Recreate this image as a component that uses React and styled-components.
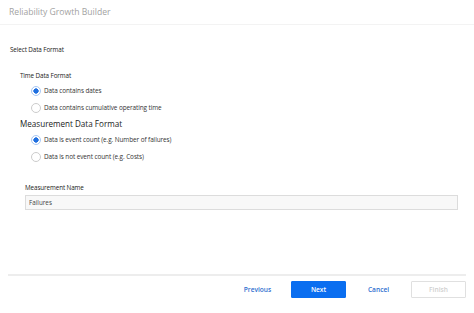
import React, { useState } from 'react';
import styled, { createGlobalStyle } from 'styled-components';

const GlobalStyle = createGlobalStyle`
  html, body {
    margin: 0;
    padding: 0;
    background: #ffffff;
    font-family: 'Open Sans', 'Liberation Sans', sans-serif;
  }
`;

const Page = styled.div`
  width: 474px;
  height: 313px;
  display: flex;
  flex-direction: column;
  overflow: hidden;
`;

const Header = styled.div`
  height: 24px;
  padding-left: 9px;
  display: flex;
  align-items: center;
  border-bottom: 1px solid #f3f3f3;
  font-size: 8.6px;
  color: #a2a2a2;
`;

const Body = styled.div`
  flex: 1;
  padding: 20px 0 0 10px;
  display: flex;
  flex-direction: column;
`;

const StepTitle = styled.div`
  font-size: 6.3px;
  letter-spacing: -0.1px;
  color: #222;
  margin-bottom: 17px;
`;

const Group = styled.div`
  padding-left: 10px;
`;

const SmallLabel = styled.div`
  font-size: 6.3px;
  letter-spacing: -0.1px;
  color: #222;
  margin-bottom: ${(p) => p.$space ?? 5}px;
`;

const BigLabel = styled.div`
  font-size: 8.1px;
  color: #222;
  margin: 5px 0 5px;
`;

const RadioList = styled.div`
  padding-left: 11px;
  display: flex;
  flex-direction: column;
  gap: 6px;
`;

const RadioRow = styled.label`
  display: flex;
  align-items: center;
  gap: 3px;
  height: 11px;
  font-size: 6.4px;
  letter-spacing: -0.08px;
  color: #333;
  cursor: pointer;
`;

const RadioDot = styled.span`
  box-sizing: border-box;
  width: 10px;
  height: 10px;
  border-radius: 50%;
  border: 1.5px solid ${(p) => (p.$checked ? '#a9c8f4' : '#cccccc')};
  background: ${(p) => (p.$checked ? 'radial-gradient(circle, #1f6fe0 0 2.4px, #ffffff 2.9px)' : '#ffffff')};
  flex-shrink: 0;
`;

const NameField = styled.div`
  margin: 21px 16px 0 15px;
`;

const NameInput = styled.input`
  display: block;
  box-sizing: border-box;
  width: 100%;
  height: 15px;
  padding: 0 3px;
  border: 1px solid #dcdcdc;
  background: #f8f8f8;
  font-family: inherit;
  font-size: 6.3px;
  color: #444;
  outline: none;
`;

const Footer = styled.div`
  box-sizing: border-box;
  margin: 0 8px;
  height: 39px;
  border-top: 2px solid #ededed;
  display: flex;
  align-items: flex-start;
  justify-content: flex-end;
  padding-top: 5px;
`;

const Button = styled.button`
  box-sizing: border-box;
  width: 55px;
  height: 17px;
  margin-left: ${(p) => p.$gap || 0}px;
  padding: 0;
  border-radius: 1px;
  font-family: inherit;
  font-size: 6.6px;
  font-weight: 600;
  cursor: pointer;
  border: 1px solid ${(p) => (p.$variant === 'primary' ? '#0a6ef0' : p.$variant === 'disabled' ? '#e0e0e0' : 'transparent')};
  background: ${(p) => (p.$variant === 'primary' ? '#0a6ef0' : '#ffffff')};
  color: ${(p) => (p.$variant === 'primary' ? '#ffffff' : p.$variant === 'disabled' ? '#cfcfcf' : '#2f6fcf')};
`;

const timeOptions = ['Data contains dates', 'Data contains cumulative operating time'];
const measureOptions = ['Data is event count (e.g. Number of failures)', 'Data is not event count (e.g. Costs)'];

const RadioGroup = ({ options, value, onChange }) => (
  <RadioList>
    {options.map((opt, i) => (
      <RadioRow key={opt} onClick={() => onChange(i)}>
        <RadioDot $checked={value === i} />
        {opt}
      </RadioRow>
    ))}
  </RadioList>
);

const App = () => {
  const [timeFormat, setTimeFormat] = useState(0);
  const [measureFormat, setMeasureFormat] = useState(0);
  const [name, setName] = useState('Failures');

  return (
    <Page>
      <GlobalStyle />
      <Header>Reliability Growth Builder</Header>
      <Body>
        <StepTitle>Select Data Format</StepTitle>
        <Group>
          <SmallLabel>Time Data Format</SmallLabel>
          <RadioGroup options={timeOptions} value={timeFormat} onChange={setTimeFormat} />
          <BigLabel>Measurement Data Format</BigLabel>
          <RadioGroup options={measureOptions} value={measureFormat} onChange={setMeasureFormat} />
        </Group>
        <NameField>
          <SmallLabel $space={3}>Measurement Name</SmallLabel>
          <NameInput value={name} onChange={(e) => setName(e.target.value)} />
        </NameField>
      </Body>
      <Footer>
        <Button>Previous</Button>
        <Button $variant="primary" $gap={6}>Next</Button>
        <Button $gap={5}>Cancel</Button>
        <Button $variant="disabled" $gap={5}>Finish</Button>
      </Footer>
    </Page>
  );
};

export default App;
